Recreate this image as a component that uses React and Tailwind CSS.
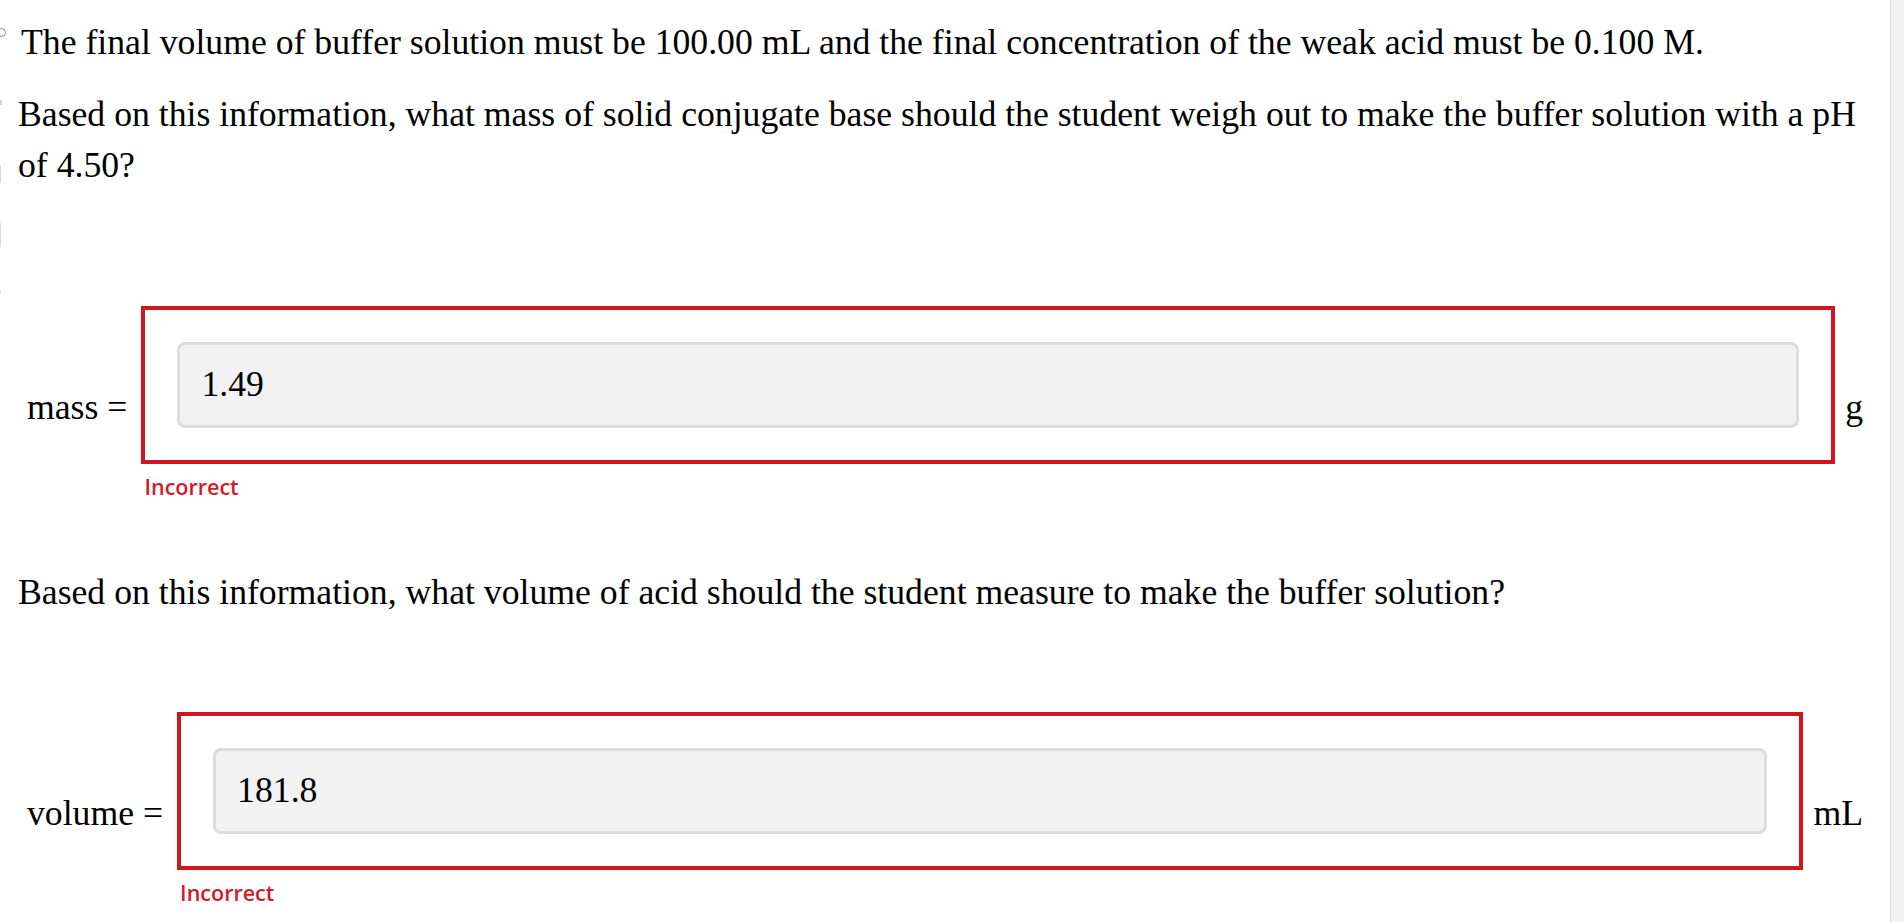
import React from "react";

const RED = "border-[#d0151f]";

function AnswerRow({ label, value, unit, className = "" }) {
  return (
    <div className={`flex items-start pl-[9px] pr-[18px] ${className}`}>
      <span className="pt-[76px] leading-[51px] pr-[14px] whitespace-nowrap">
        {label}&nbsp;=
      </span>
      <div className="flex-1">
        <div className={`border-4 ${RED} p-[32px]`}>
          <div className="h-[86px] border-[3px] border-[#dcdcdc] bg-[#f2f2f2] rounded-[8px] px-[21px] pt-[14px] leading-[51px]">
            {value}
          </div>
        </div>
        <div className="mt-[9px] pl-[3px] font-['Open_Sans',sans-serif] font-semibold text-[21.5px] leading-[28px] text-[#d4182a]">
          Incorrect
        </div>
      </div>
      <span className="pt-[76px] leading-[51px] pl-[10px] whitespace-nowrap">
        {unit}
      </span>
    </div>
  );
}

export default function App() {
  return (
    <div className="flex h-screen overflow-hidden bg-white text-black font-['Liberation_Serif','Times_New_Roman',serif] text-[35.7px]">
      {/* cut-off bits from the neighbouring panel */}
      <div className="w-[6px] shrink-0 flex flex-col">
        <div className="mt-[28px] -ml-[3px] w-[9px] h-[9px] rounded-full border-[1.5px] border-[#8a8a8a]" />
        <div className="mt-[63px] w-[2px] h-[5px] bg-[#d6d6d6]" />
        <div className="mt-[60px] w-[1px] h-[18px] bg-[#d6d6d6]" />
        <div className="mt-[40px] w-[1px] h-[24px] bg-[#dcdcdc]" />
        <div className="mt-[43px] w-[1px] h-[3px] bg-[#dcdcdc]" />
      </div>

      <main className="flex-1 pl-[12px] pr-[9px]">
        <p className="mt-[17px] leading-[51px] pl-[3px]">
          The final volume of buffer solution must be 100.00 mL and the final
          concentration of the weak acid must be 0.100 M.
        </p>
        <p className="mt-[21px] leading-[51px]">
          Based on this information, what mass of solid conjugate base should
          the student weigh out to make the buffer solution with a pH of 4.50?
        </p>

        <AnswerRow className="mt-[115px]" label="mass" value="1.49" unit="g" />

        <p className="mt-[66px] leading-[51px]">
          Based on this information, what volume of acid should the student
          measure to make the buffer solution?
        </p>

        <AnswerRow
          className="mt-[94px]"
          label="volume"
          value="181.8"
          unit="mL"
        />
      </main>

      <div className="w-[14px] shrink-0 bg-[#f1f1f1] border-l border-[#dedede]" />
    </div>
  );
}
